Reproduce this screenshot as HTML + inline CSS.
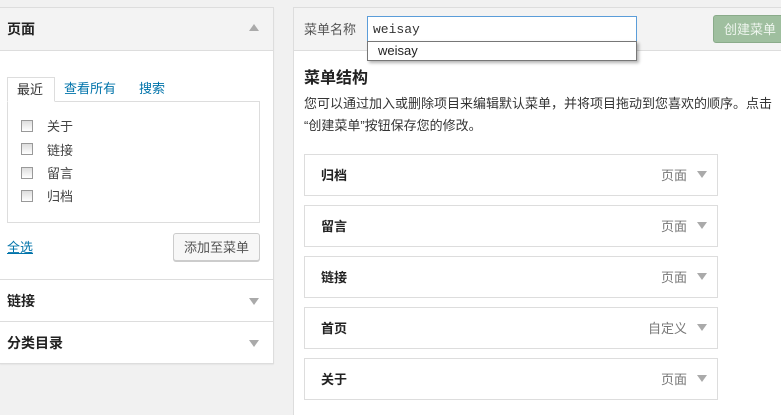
<!DOCTYPE html>
<html style="overflow:hidden;height:415px"><head><meta charset="utf-8"><style>
*{box-sizing:border-box;margin:0;padding:0}
body{width:781px;height:415px;overflow:hidden;background:#f1f1f1;font-family:"Liberation Sans","Noto Sans CJK SC",sans-serif;font-size:13px;color:#333;position:relative}
.abs{position:absolute}
.lp{left:0;top:7px;width:274px;height:357px;background:#fff;border:1px solid #ddd;border-left:none;box-shadow:0 1px 1px rgba(0,0,0,.05)}
.hd{position:absolute;left:0;width:273px;height:43px;border-bottom:1px solid #ddd;font-weight:bold;font-size:14px;color:#222;padding:11px 0 0 7px}
.tri{position:absolute;width:0;height:0;border-left:5px solid transparent;border-right:5px solid transparent}
.dn{border-top:7px solid #aaa}
.up{border-bottom:7px solid #aaa}
.cb{position:absolute;left:21px;width:12px;height:12px;border:1px solid #999;background:linear-gradient(#ddd,#fff)}
.lab{position:absolute;left:47px;font-size:13px;color:#444}
.rp{left:293px;top:7px;width:488px;height:408px;background:#fff;border:1px solid #ddd;border-right:none;border-bottom:none}
.it{position:absolute;left:304px;width:414px;height:42px;border:1px solid #ddd;background:#fff;font-weight:bold;font-size:13px;color:#222;padding:10px 0 0 16px}
.it span{position:absolute;right:30px;top:10px;font-weight:normal;color:#777}
.it i{position:absolute;right:10px;top:16px;width:0;height:0;border-left:5px solid transparent;border-right:5px solid transparent;border-top:7px solid #aaa}
</style></head><body>
<div class="abs lp">
 <div class="hd" style="top:0;background:#f3f3f3">页面<div class="tri up" style="left:249px;top:16px"></div></div>
 <div class="abs" style="left:7px;top:69px;width:48px;height:25px;border:1px solid #ddd;border-bottom:1px solid #fff;background:#fff;padding:1px 0 0 9px;z-index:2">最近</div>
 <div class="abs" style="left:64px;top:70px;color:#0073aa">查看所有</div>
 <div class="abs" style="left:139px;top:70px;color:#0073aa">搜索</div>
 <div class="abs" style="left:7px;top:93px;width:253px;height:122px;border:1px solid #ddd"></div>
 <div class="cb" style="top:112px"></div><div class="lab" style="top:108px">关于</div>
 <div class="cb" style="top:135px"></div><div class="lab" style="top:132px">链接</div>
 <div class="cb" style="top:159px"></div><div class="lab" style="top:155px">留言</div>
 <div class="cb" style="top:182px"></div><div class="lab" style="top:178px">归档</div>
 <div class="abs" style="left:7px;top:229px;color:#0073aa;text-decoration:underline">全选</div>
 <div class="abs" style="left:173px;top:225px;width:87px;height:28px;border:1px solid #ccc;border-radius:3px;background:#f7f7f7;box-shadow:0 1px 0 #ccc;color:#555;padding:3px 0 0 10px">添加至菜单</div>
 <div class="hd" style="top:271px;border-top:1px solid #ddd;height:43px">链接<div class="tri dn" style="left:249px;top:18px"></div></div>
 <div class="hd" style="top:314px;height:43px;border-bottom:none">分类目录<div class="tri dn" style="left:249px;top:18px"></div></div>
</div>
<div class="abs rp"></div>
<div class="abs" style="left:294px;top:8px;width:487px;height:43px;background:#f3f3f3;border-bottom:1px solid #ddd"></div>
<div class="abs" style="left:304px;top:19px;color:#555">菜单名称</div>
<div class="abs" style="left:367px;top:16px;width:270px;height:26px;border:1px solid #5b9dd9;background:#fff;font-family:'Liberation Mono',monospace;font-size:13px;padding:5px 0 0 5px;color:#333">weisay</div>
<div class="abs" style="left:367px;top:41px;width:270px;height:20px;border:1px solid #777;background:#fff;box-shadow:2px 2px 3px rgba(0,0,0,.3);padding:1px 0 0 10px;color:#222">weisay</div>
<div class="abs" style="left:713px;top:15px;width:80px;height:28px;background:#9fbf9f;border:1px solid #8aab8a;border-radius:3px;color:#eef5ee;padding:3px 0 0 10px">创建菜单</div>
<div class="abs" style="left:304px;top:64px;font-size:16px;font-weight:bold;color:#222">菜单结构</div>
<div class="abs" style="left:304px;top:93px;width:480px;line-height:22px;color:#333">您可以通过加入或删除项目来编辑默认菜单，并将项目拖动到您喜欢的顺序。点击<br>“创建菜单”按钮保存您的修改。</div>
<div class="it" style="top:154px">归档<span>页面</span><i></i></div>
<div class="it" style="top:205px">留言<span>页面</span><i></i></div>
<div class="it" style="top:256px">链接<span>页面</span><i></i></div>
<div class="it" style="top:307px">首页<span>自定义</span><i></i></div>
<div class="it" style="top:358px">关于<span>页面</span><i></i></div>
</body></html>
